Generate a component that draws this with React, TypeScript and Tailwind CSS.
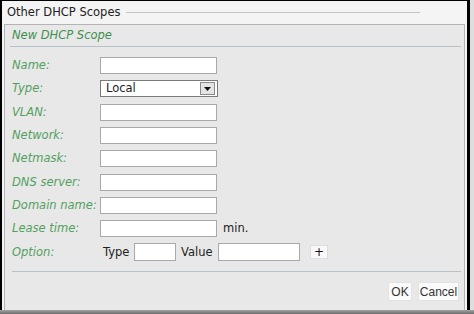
import React from 'react'

const font = { fontFamily: '"DejaVu Sans", Verdana, sans-serif' }

const rows = ['Name:', 'Type:', 'VLAN:', 'Network:', 'Netmask:', 'DNS server:', 'Domain name:', 'Lease time:']

function TextBox({ w = 'w-[117px]' }: { w?: string }) {
  return <div className={`${w} h-[17px] bg-white border border-[#a9a9a9] shrink-0`} />
}

function SelectBox() {
  return (
    <div className="w-[118px] h-[17px] bg-white border border-[#7a7a7a] flex items-center shrink-0">
      <span className="pl-[5px] flex-1 text-[11.5px] text-[#222]">Local</span>
      <div className="w-[15px] h-[13px] mr-[2px] bg-[#e4e4e4] border border-[#8a8a8a] flex items-center justify-center">
        <svg width="7" height="4" viewBox="0 0 7 4">
          <path d="M0 0h7L3.5 4z" fill="#111" />
        </svg>
      </div>
    </div>
  )
}

export default function App() {
  return (
    <div className="w-[474px] h-[314px] bg-[#dedede] overflow-hidden" style={font}>
      <div className="w-[470px] h-[310px] border-t border-l-2 border-r-[3px] border-black bg-[#f4f4f4] flex flex-col">
        {/* Fieldset legend */}
        <div className="h-[23px] flex items-center pl-[5px] shrink-0">
          <span className="text-[11.5px] text-[#222] whitespace-nowrap">Other DHCP Scopes</span>
          <div className="ml-[6px] w-[294px] border-t border-[#c4c4c4]" />
        </div>

        {/* Inner panel */}
        <div className="flex-1 ml-[2px] mr-[2px] bg-[#e8e8e8] border-t border-l border-r border-[#b4b4b4] flex flex-col">
          <div className="h-[21px] flex items-center pl-[7px] shrink-0">
            <span className="text-[11.5px] italic text-[#3f8f50]">New DHCP Scope</span>
          </div>
          <div className="ml-[5px] mr-[3px] border-t border-[#b7c3cb]" />

          <div className="pt-[7px] flex flex-col">
            {rows.map((label) => (
              <div key={label} className="h-[23.33px] flex items-center pl-[7px]">
                <span className="w-[88px] text-[11.5px] italic text-[#52a060] whitespace-nowrap">{label}</span>
                {label === 'Type:' ? <SelectBox /> : <TextBox />}
                {label === 'Lease time:' && <span className="ml-[6px] text-[11.5px] text-[#222]">min.</span>}
              </div>
            ))}
            <div className="h-[23.33px] flex items-center pl-[7px]">
              <span className="w-[91px] shrink-0 text-[11.5px] italic text-[#52a060]">Option:</span>
              <span className="w-[31px] shrink-0 text-[11.5px] text-[#222]">Type</span>
              <div className="w-[42px] h-[18px] shrink-0 bg-white border border-[#a9a9a9]" />
              <span className="ml-[5px] w-[37px] shrink-0 text-[11.5px] text-[#222]">Value</span>
              <div className="w-[82px] h-[18px] shrink-0 bg-white border border-[#a9a9a9]" />
              <button className="ml-[10px] w-[18px] h-[14px] bg-[#f8f8f8] border border-[#dcdcdc] text-[12px] leading-none text-[#111] flex items-center justify-center">
                +
              </button>
            </div>
          </div>

          <div className="mt-[7px] ml-[7px] mr-[3px] border-t border-[#b7c3cb]" />

          <div className="flex justify-end gap-[6px] pt-[10px] pr-[5px]" style={{ fontFamily: '"Liberation Sans", Arial, sans-serif' }}>
            <button className="w-[24px] h-[19px] bg-[#fafafa] border border-[#e2e2e2] text-[12px] text-[#333]">OK</button>
            <button className="w-[41px] h-[19px] bg-[#fafafa] border border-[#e2e2e2] text-[12px] text-[#333]">Cancel</button>
          </div>
        </div>
      </div>
      <div className="h-[4px] bg-gradient-to-b from-[#a4a4a4] to-[#6c6c6c]" />
    </div>
  )
}
